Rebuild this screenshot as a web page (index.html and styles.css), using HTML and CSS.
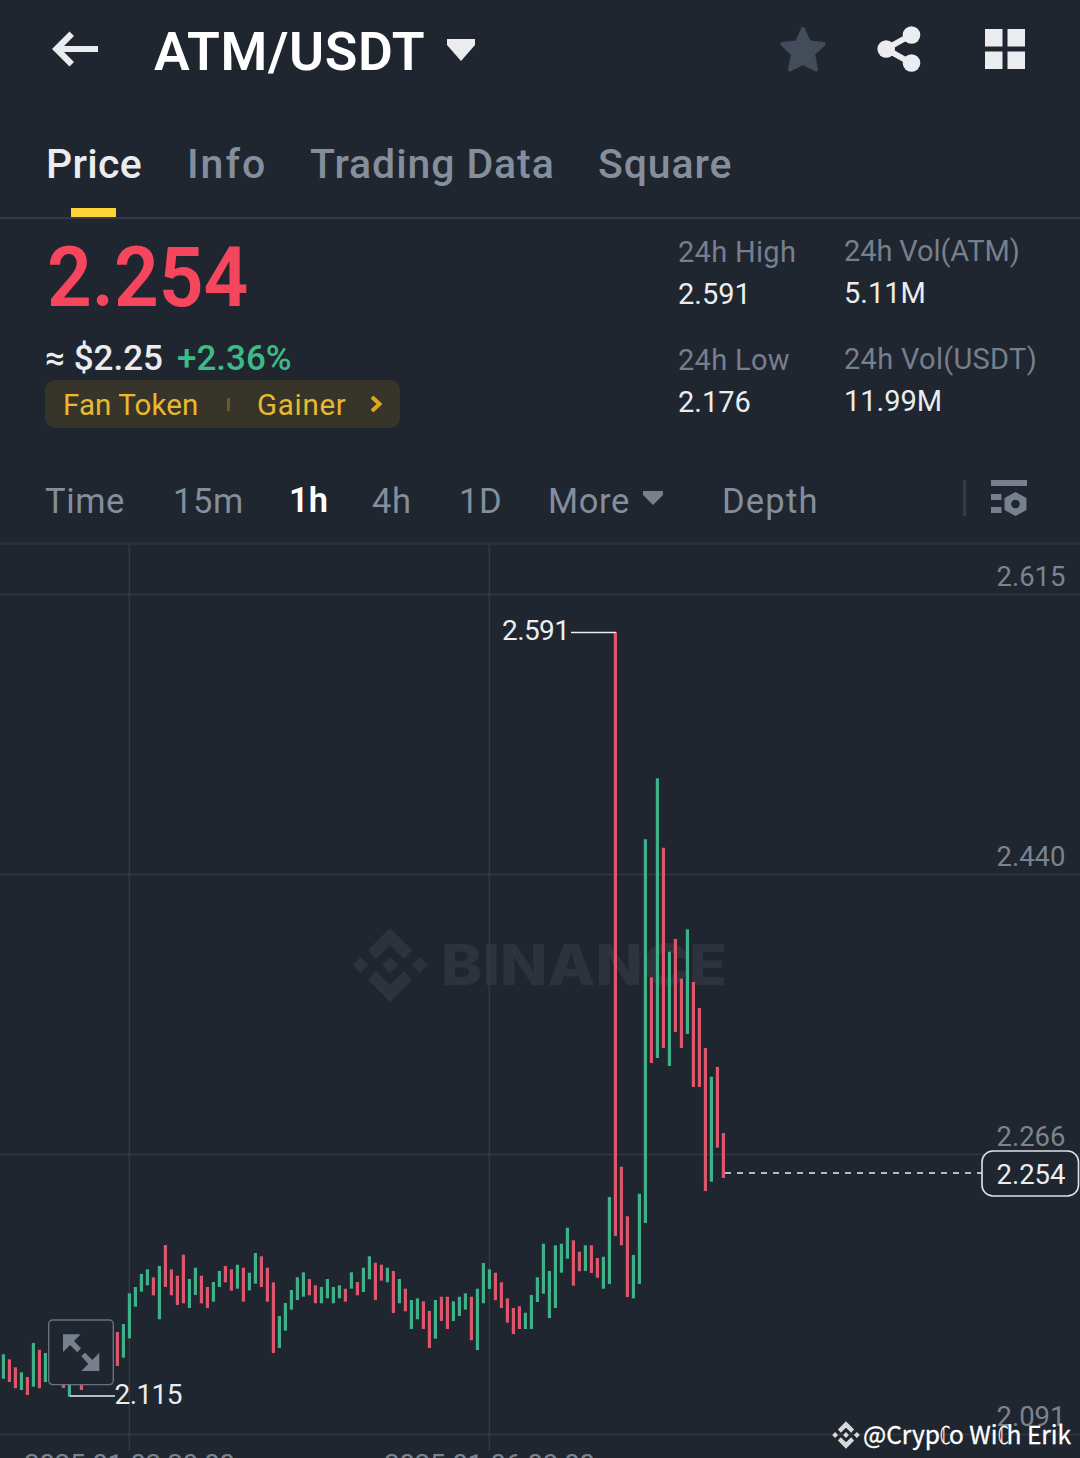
FILE: index.html
```html
<!DOCTYPE html>
<html lang="en">
<head>
    <meta charset="UTF-8">
    <meta name="viewport" content="width=device-width, initial-scale=1.0">
    <title>ATM/USDT</title>
    <link rel="stylesheet" href="styles.css">
</head>
<body>
    <header class="topbar">
        <svg class="back" width="46" height="36" viewBox="0 0 46 36"><path d="M46 15H12L22 5 17.500 0.500 0 18 17.500 35.500 22 31 12 21H46Z"/></svg>
        <h1 class="pair">ATM/USDT</h1>
        <svg class="pair-caret" width="28" height="22" viewBox="0 0 28 22"><path d="M0 0H28V6L14 22 0 6Z"/></svg>
        <div class="actions">
            <svg class="star" width="46" height="46" viewBox="0 0 46 46"><path d="M23 3L29 16.500 43.500 18 33 28 36 43.500 23 37 10 43.500 13 28 2.500 18 17 16.500Z"/></svg>
            <svg width="44" height="46" viewBox="0 0 44 46"><path class="share-line" d="M34 9L9 23 34 37"/><circle cx="9.200" cy="23" r="8.800"/><circle cx="34.500" cy="9" r="8.800"/><circle cx="34.500" cy="37" r="8.800"/></svg>
            <svg width="40" height="40" viewBox="0 0 40 40"><path d="M0 0H17.500V17.500H0ZM22.500 0H40V17.500H22.500ZM0 22.500H17.500V40H0ZM22.500 22.500H40V40H22.500Z"/></svg>
        </div>
    </header>

    <nav class="tabs">
        <a class="tab active">Price</a>
        <a class="tab info">Info</a>
        <a class="tab">Trading Data</a>
        <a class="tab">Square</a>
    </nav>

    <section class="summary">
        <div class="price-box">
            <div class="price">2.254</div>
            <div class="change"><span class="fiat">≈ $2.25</span><span class="percent">+2.36%</span></div>
            <div class="tags">
                <span class="tag-fan">Fan Token</span>
                <i class="tag-sep"></i>
                <span class="tag-gainer">Gainer</span>
                <svg width="14" height="18" viewBox="0 0 14 18"><path d="M2 2L9.500 9 2 16"/></svg>
            </div>
        </div>
        <dl class="stats">
            <div><dt>24h High</dt><dd>2.591</dd></div>
            <div class="vol"><dt class="vol-atm">24h Vol(ATM)</dt><dd>5.11M</dd></div>
            <div><dt>24h Low</dt><dd>2.176</dd></div>
            <div class="vol"><dt>24h Vol(USDT)</dt><dd>11.99M</dd></div>
        </dl>
    </section>

    <nav class="periods">
        <a>Time</a>
        <a>15m</a>
        <a class="active">1h</a>
        <a>4h</a>
        <a>1D</a>
        <a>More <svg width="20" height="14" viewBox="0 0 20 14"><path d="M0 0H20V4L10 14 0 4Z"/></svg></a>
        <a class="depth">Depth</a>
        <div class="settings">
            <svg width="36" height="36" viewBox="0 0 36 36"><path fill-rule="evenodd" d="M0 0H36V6H0ZM0 14H10.500V20H0ZM0 27H10.500V33H0ZM24.500 12L35.500 18V30L24.500 36 13.500 30V18ZM24.500 19.700a4.300 4.300 0 1 0 0.010 0Z"/></svg>
        </div>
    </nav>

    <main class="chart">
        <svg width="1080" height="916" viewBox="0 542 1080 916">
            <defs>
                <g id="logo">
                    <path d="M0 -37L22 -15 14 -6 0 -20 -14 -6 -22 -15Z"/>
                    <path d="M0 37L22 15 14 6 0 20 -14 6 -22 15Z"/>
                    <path d="M0 -8L8 0 0 8 -8 0Z"/>
                    <path d="M-29.500 -8L-21.500 0 -29.500 8 -37.500 0Z"/>
                    <path d="M29.500 -8L37.500 0 29.500 8 21.500 0Z"/>
                </g>
            </defs>

            <g class="brand">
                <use href="#logo" x="390" y="965"/>
                <text x="441" y="985" textLength="286" lengthAdjust="spacingAndGlyphs">BINANCE</text>
            </g>

            <path class="top-line" d="M0 543.500H1080"/>
            <path class="grid" d="M0 594.500H1080M0 874.500H1080M0 1154.500H1080M0 1434.500H1080M129.300 545V1450M489.300 545V1450"/>

            <g class="axis">
                <text x="996.500" y="586" textLength="69" lengthAdjust="spacingAndGlyphs">2.615</text>
                <text x="996.500" y="866" textLength="69" lengthAdjust="spacingAndGlyphs">2.440</text>
                <text x="996.500" y="1146" textLength="69" lengthAdjust="spacingAndGlyphs">2.266</text>
                <text x="996.500" y="1426" textLength="69" lengthAdjust="spacingAndGlyphs">2.091</text>
                <text x="24" y="1474" textLength="211">2025-01-03 20:00</text>
                <text x="384" y="1474" textLength="211">2025-01-06 08:00</text>
            </g>

            <g id="candles"></g>

            <path class="marker" d="M571 632.500H616M70 1396H115"/>
            <g class="label">
                <text x="502" y="640" textLength="68">2.591</text>
                <text x="114.500" y="1404" textLength="68">2.115</text>
            </g>

            <path class="last-line" d="M725 1173H982"/>
            <rect class="last-box" x="982" y="1151" width="96.500" height="45" rx="11"/>
            <text class="label" x="996.500" y="1184" textLength="69" lengthAdjust="spacingAndGlyphs">2.254</text>

            <rect class="expand-box" x="48.700" y="1320" width="64.600" height="64.600" rx="4"/>
            <path class="expand-icon" d="M63 1334.300H80.700L74 1341 81 1348.300 77.300 1352.300 70 1345 63 1352ZM99.300 1371H81.300L88.300 1364 81.300 1356 85 1352.700 92.300 1360 99.300 1352.700Z"/>
        </svg>

        <div class="credit">
            <svg width="28" height="28" viewBox="-38 -38 76 76"><use href="#logo"/></svg>
            <span>@Cryp<b>ℂ</b>o Wi<b>ℂ</b>h Erik</span>
        </div>
    </main>

    <script src="chart.js"></script>
</body>
</html>
```
FILE: styles.css
```css
* {
    margin: 0;
    padding: 0;
    box-sizing: border-box;
}

body {
    width: 1080px;
    height: 1458px;
    overflow: hidden;
    background-color: #1f262f;
    color: #eaecef;
    font-family: Roboto, sans-serif;
}

svg {
    display: block;
    flex: none;
}

/* top bar */
.topbar {
    display: flex;
    align-items: center;
    height: 98px;
    padding: 0 55px 0 52px;
    fill: #eaecef;
}

.pair {
    width: 293px;
    margin-left: 56px;
    padding-top: 5px;
    color: #fff;
    font-size: 53.5px;
    font-weight: 600;
    line-height: 60px;
    letter-spacing: 0.6px;
    white-space: nowrap;
}

.pair-caret {
    margin-top: 2px;
}

.actions {
    display: flex;
    align-items: center;
    margin-left: auto;
}

.star {
    margin-right: 51px;
    fill: #434c5a;
    stroke: #434c5a;
    stroke-width: 4;
    stroke-linejoin: round;
}

.actions svg:last-child {
    margin-left: 64px;
}

.share-line {
    fill: none;
    stroke: #eaecef;
    stroke-width: 6;
}

/* tabs */
.tabs {
    display: grid;
    grid-template-columns: 141px 123px 288px 200px;
    height: 121px;
    padding: 42px 0 0 46px;
    border-bottom: 2px solid #343b46;
}

.tab {
    position: relative;
    color: #848e9c;
    font-size: 41px;
    font-weight: 500;
    line-height: 48px;
    letter-spacing: 0.9px;
    white-space: nowrap;
}

.tab.info {
    letter-spacing: 2px;
}

.tab.active {
    color: #eaecef;
    letter-spacing: 0.3px;
}

.tab.active::after {
    content: "";
    position: absolute;
    left: 25px;
    bottom: 0;
    width: 45px;
    height: 9px;
    background-color: #fcd535;
}

/* price and 24h stats */
.summary {
    display: flex;
    justify-content: space-between;
    height: 243px;
    padding: 13px 0 0 45px;
}

.price {
    height: 92px;
    padding-left: 2px;
    color: #f6465d;
    font-size: 83px;
    font-weight: 600;
    line-height: 92px;
    transform: scaleX(0.945);
    transform-origin: left;
}

.change {
    display: flex;
    height: 56px;
    padding-top: 15px;
    font-size: 35px;
    font-weight: 500;
    line-height: 40px;
    white-space: nowrap;
}

.fiat {
    width: 132px;
}

.percent {
    color: #3dba88;
}

.tags {
    display: flex;
    align-items: center;
    width: 355px;
    height: 48px;
    padding-left: 18px;
    border-radius: 10px;
    background-color: #373529;
    color: #e8b92f;
    font-size: 29.5px;
    line-height: 36px;
    letter-spacing: 0.7px;
    white-space: nowrap;
}

.tags span {
    padding-top: 1px;
}

.tag-fan {
    width: 164px;
    letter-spacing: 0.1px;
}

.tag-sep {
    width: 3px;
    height: 13px;
    background-color: #6b5928;
}

.tag-gainer {
    width: 113px;
    margin-left: 27px;
}

.tags path {
    fill: none;
    stroke: #dca81f;
    stroke-width: 4;
}

.stats {
    display: grid;
    grid-template-columns: 166px 236px;
    grid-auto-rows: 108px;
    margin-top: -1px;
    font-size: 29px;
    line-height: 42px;
    white-space: nowrap;
}

.stats .vol {
    margin-top: -1px;
}

.stats dt {
    color: #767f8d;
    letter-spacing: 0.3px;
}

.stats .vol-atm {
    letter-spacing: -0.1px;
}

/* chart periods */
.periods {
    display: grid;
    grid-template-columns: 128px 116px 83px 87px 89px 174px 240px auto;
    align-items: center;
    height: 80px;
    padding: 0 0 2px 45px;
    color: #848e9c;
    font-size: 34.5px;
    line-height: 42px;
    letter-spacing: 0.6px;
    white-space: nowrap;
}

.periods a {
    display: flex;
    align-items: center;
}

.periods .active {
    color: #fff;
    font-weight: 600;
    padding-bottom: 2px;
    letter-spacing: 0;
}

.periods .depth {
    letter-spacing: 1.2px;
}

.periods a svg {
    margin: -6px 0 0 13px;
    fill: #76808f;
}

.settings {
    margin: -6px 0 0 1px;
    padding-left: 25px;
    border-left: 3px solid #343b46;
    fill: #76808f;
}

/* chart */
.chart {
    position: relative;
    height: 916px;
}

.top-line {
    stroke: #292f39;
    stroke-width: 3;
}

.grid {
    fill: none;
    stroke: #333943;
    stroke-width: 1.5;
}

.brand {
    fill: #2d323d;
    font-family: Inter, sans-serif;
    font-size: 57px;
    font-weight: 800;
}

.axis {
    fill: #7b8390;
    font-size: 28px;
}

.label {
    fill: #eaecef;
    font-size: 28px;
}

.up {
    stroke: #3fb188;
}

.down {
    stroke: #dc566c;
}

#candles {
    stroke-width: 3.2;
}

.marker {
    stroke: #eaecef;
    stroke-width: 1.6;
}

.last-line {
    stroke: #eaecef;
    stroke-width: 1.7;
    stroke-dasharray: 6 6;
}

.last-box {
    fill: #1f262f;
    stroke: #dfe2e6;
    stroke-width: 1.6;
}

.expand-box {
    fill: #1f262f;
    stroke: #69717f;
    stroke-width: 1.4;
}

.expand-icon {
    fill: #76808f;
}

/* author mark over the chart corner */
.credit {
    position: absolute;
    left: 832px;
    bottom: 6px;
    display: flex;
    align-items: center;
    gap: 3px;
    color: #fff;
    fill: #d9d9d9;
    font-family: "Noto Sans CJK SC", sans-serif;
    font-size: 24.5px;
    font-weight: 400;
    line-height: 36px;
    white-space: nowrap;
    -webkit-text-stroke: 0.3px #fff;
}

.credit span {
    margin-top: -2px;
}

.credit b {
    display: inline-block;
    width: 9px;
    font-family: "DejaVu Sans", sans-serif;
    font-weight: 400;
    line-height: 24px;
    transform: scaleX(0.6);
    transform-origin: left;
}
```
FILE: chart.js
```js
// one bar per hour: slot, direction, high y, low y
const bars = [
    [0, 'up', 1354.3, 1378.7], [1, 'down', 1359.3, 1382], [2, 'down', 1367.3, 1388.3], [3, 'up', 1372.3, 1390],
    [4, 'down', 1377, 1395], [5, 'up', 1343, 1386.7], [6, 'down', 1349.7, 1388.3], [7, 'up', 1353, 1382],
    [10, 'down', 1370, 1388], [11, 'up', 1372, 1396.7], [13, 'down', 1370, 1390],
    [19, 'down', 1332, 1366], [20, 'up', 1324, 1357.7], [21, 'up', 1293.3, 1338.3], [22, 'up', 1287, 1306.7],
    [23, 'up', 1274, 1291.7], [24, 'up', 1269.3, 1285.3], [25, 'down', 1277.3, 1295.3], [26, 'up', 1266, 1319.3],
    [27, 'down', 1245, 1287], [28, 'down', 1269.3, 1295.3], [29, 'down', 1275.7, 1305], [30, 'down', 1254.7, 1303.3],
    [31, 'up', 1279, 1308], [32, 'up', 1267.7, 1295], [33, 'down', 1275.7, 1303.3], [34, 'down', 1287, 1308],
    [35, 'up', 1282, 1301.7], [36, 'up', 1271, 1287], [37, 'down', 1266, 1282.3], [38, 'down', 1269.3, 1290.7],
    [39, 'up', 1264.7, 1288.7], [40, 'down', 1267.7, 1301.7], [41, 'up', 1272.7, 1290.3], [42, 'up', 1253, 1283.7],
    [43, 'down', 1256.3, 1287], [44, 'down', 1267.7, 1301.7], [45, 'down', 1282.3, 1353], [46, 'up', 1316, 1348],
    [47, 'up', 1303, 1330.7], [48, 'up', 1290, 1309.7], [49, 'up', 1277.3, 1300], [50, 'up', 1272.3, 1296.7],
    [51, 'down', 1279, 1295.3], [52, 'down', 1285.3, 1303.3], [53, 'up', 1287, 1303.3], [54, 'up', 1279, 1298.3],
    [55, 'up', 1287, 1303.3], [56, 'up', 1285.3, 1298.3], [57, 'down', 1288.7, 1301.7], [58, 'up', 1272.3, 1288.7],
    [59, 'down', 1282, 1295.3], [60, 'up', 1267.7, 1292], [61, 'up', 1256.3, 1279.3], [62, 'down', 1262.7, 1300],
    [63, 'down', 1264.7, 1280.7], [64, 'up', 1267.7, 1282.3], [65, 'down', 1271, 1313], [66, 'up', 1279, 1303.3],
    [67, 'down', 1288.7, 1311.3], [68, 'up', 1300, 1329], [69, 'up', 1298.3, 1319.3], [70, 'down', 1301.3, 1329],
    [71, 'down', 1311, 1348], [72, 'up', 1300, 1338.7], [73, 'down', 1296.7, 1321], [74, 'down', 1296.7, 1329],
    [75, 'up', 1301.3, 1321], [76, 'up', 1296.7, 1316], [77, 'up', 1293.3, 1309.7], [78, 'down', 1296.7, 1340.3],
    [79, 'up', 1288.7, 1350], [80, 'up', 1263, 1303.3], [81, 'up', 1269.3, 1289], [82, 'down', 1272.7, 1300.3],
    [83, 'down', 1282.3, 1308], [84, 'down', 1298.3, 1322.7], [85, 'down', 1308, 1334], [86, 'down', 1306.3, 1329],
    [87, 'up', 1312.7, 1329], [88, 'up', 1295, 1329], [89, 'up', 1277.3, 1302], [90, 'up', 1243.7, 1293.7],
    [91, 'up', 1271, 1318], [92, 'up', 1245.3, 1308], [93, 'up', 1243.7, 1272.7], [94, 'up', 1227.7, 1258.7],
    [95, 'down', 1240.3, 1285.7], [96, 'down', 1251.7, 1271.3], [97, 'up', 1245.3, 1271], [98, 'down', 1245.3, 1273],
    [99, 'down', 1258, 1277.7], [100, 'up', 1256.7, 1288.7], [101, 'up', 1197, 1284], [102, 'down', 632, 1236],
    [103, 'down', 1166.7, 1245.3], [104, 'down', 1216.3, 1297], [105, 'up', 1255, 1298.3], [106, 'up', 1193.7, 1284],
    [107, 'up', 839.3, 1223], [108, 'down', 977.3, 1063], [109, 'up', 778.3, 1058], [110, 'down', 847.7, 1048],
    [111, 'up', 951.7, 1066], [112, 'down', 939, 1032], [113, 'down', 978.7, 1048], [114, 'up', 929.3, 1034],
    [115, 'down', 982, 1087], [116, 'down', 1008, 1087], [117, 'down', 1048, 1191], [118, 'up', 1076.7, 1181.7],
    [119, 'down', 1067, 1147.7], [120, 'down', 1133, 1178]
];

const group = document.getElementById('candles');

bars.forEach(([slot, dir, high, low]) => {
    const line = document.createElementNS('http://www.w3.org/2000/svg', 'line');
    const x = 3.4 + slot * 6;
    line.setAttribute('class', dir);
    line.setAttribute('x1', x);
    line.setAttribute('x2', x);
    line.setAttribute('y1', high);
    line.setAttribute('y2', low);
    group.appendChild(line);
});
```
